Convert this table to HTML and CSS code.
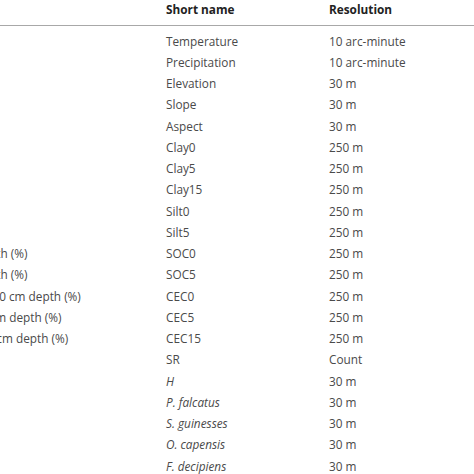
FILE: index.html
```html
<!DOCTYPE html>
<html lang="en">
<head>
<meta charset="utf-8">
<title>Variables</title>
<link rel="stylesheet" href="styles.css">
</head>
<body>
<div class="table">
  <div class="row head">
    <div class="cell desc"></div>
    <div class="cell">Short name</div>
    <div class="cell">Resolution</div>
  </div>
  <div class="body">
    <div class="row"><div class="cell desc"></div><div class="cell">Temperature</div><div class="cell">10 arc-minute</div></div>
    <div class="row"><div class="cell desc"></div><div class="cell">Precipitation</div><div class="cell">10 arc-minute</div></div>
    <div class="row"><div class="cell desc"></div><div class="cell">Elevation</div><div class="cell">30 m</div></div>
    <div class="row"><div class="cell desc"></div><div class="cell">Slope</div><div class="cell">30 m</div></div>
    <div class="row"><div class="cell desc"></div><div class="cell">Aspect</div><div class="cell">30 m</div></div>
    <div class="row"><div class="cell desc"></div><div class="cell">Clay0</div><div class="cell">250 m</div></div>
    <div class="row"><div class="cell desc"></div><div class="cell">Clay5</div><div class="cell">250 m</div></div>
    <div class="row"><div class="cell desc"></div><div class="cell">Clay15</div><div class="cell">250 m</div></div>
    <div class="row"><div class="cell desc"></div><div class="cell">Silt0</div><div class="cell">250 m</div></div>
    <div class="row"><div class="cell desc"></div><div class="cell">Silt5</div><div class="cell">250 m</div></div>
    <div class="row"><div class="cell desc">Soil organic carbon at 0 cm depth (%)</div><div class="cell">SOC0</div><div class="cell">250 m</div></div>
    <div class="row"><div class="cell desc">Soil organic carbon at 5 cm depth (%)</div><div class="cell">SOC5</div><div class="cell">250 m</div></div>
    <div class="row"><div class="cell desc">Cation exchange capacity at 0–10 cm depth (%)</div><div class="cell">CEC0</div><div class="cell">250 m</div></div>
    <div class="row"><div class="cell desc">Cation exchange capacity at 5 cm depth (%)</div><div class="cell">CEC5</div><div class="cell">250 m</div></div>
    <div class="row"><div class="cell desc">Cation exchange capacity at 15 cm depth (%)</div><div class="cell">CEC15</div><div class="cell">250 m</div></div>
    <div class="row"><div class="cell desc"></div><div class="cell">SR</div><div class="cell">Count</div></div>
    <div class="row"><div class="cell desc"></div><div class="cell"><i>H</i></div><div class="cell">30 m</div></div>
    <div class="row"><div class="cell desc"></div><div class="cell"><i>P. falcatus</i></div><div class="cell">30 m</div></div>
    <div class="row"><div class="cell desc"></div><div class="cell"><i>S. guinesses</i></div><div class="cell">30 m</div></div>
    <div class="row"><div class="cell desc"></div><div class="cell"><i>O. capensis</i></div><div class="cell">30 m</div></div>
    <div class="row"><div class="cell desc"></div><div class="cell"><i>F. decipiens</i></div><div class="cell">30 m</div></div>
  </div>
</div>
</body>
</html>
```
FILE: styles.css
```css
html, body {
  margin: 0;
  padding: 0;
  background: #ffffff;
}
body {
  overflow: hidden;
  width: 474px;
  height: 474px;
  font-family: "Open Sans", "Liberation Sans", sans-serif;
  font-size: 11.8px;
  color: #4a4a4a;
}
.table {
  margin-left: -176px;
  width: 650px;
}
.row {
  display: grid;
  grid-template-columns: 342px 163px 1fr;
  line-height: 21.25px;
  white-space: nowrap;
}
.head {
  line-height: 18px;
  font-weight: 700;
  color: #222222;
  padding-bottom: 7px;
  border-bottom: 1px solid #a8a8a8;
}
.body {
  padding-top: 4.7px;
}
.cell i {
  font-style: italic;
}
```
